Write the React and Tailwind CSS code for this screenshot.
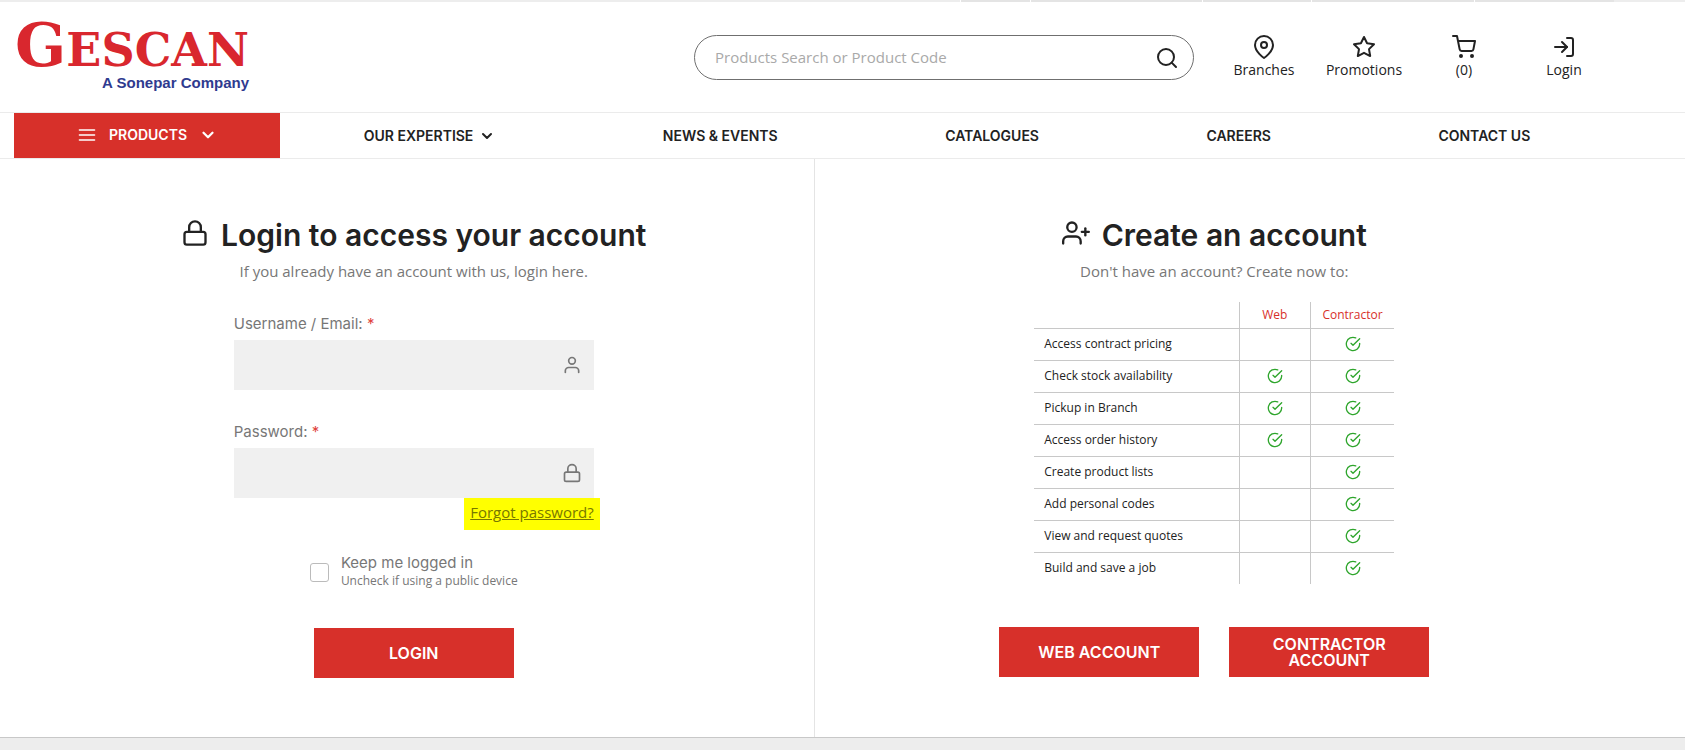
import { useState } from "react";

import {
  FiCheckCircle,
  FiChevronDown,
  FiLock,
  FiLogIn,
  FiMapPin,
  FiMenu,
  FiSearch,
  FiShoppingCart,
  FiStar,
  FiUser,
  FiUserPlus,
} from "react-icons/fi";

const headerLinks = [
  { label: "Branches", Icon: FiMapPin },
  { label: "Promotions", Icon: FiStar },
  { label: "(0)", Icon: FiShoppingCart },
  { label: "Login", Icon: FiLogIn },
];

const navLinks = [
  { label: "OUR EXPERTISE", hasMenu: true },
  { label: "NEWS & EVENTS" },
  { label: "CATALOGUES" },
  { label: "CAREERS" },
  { label: "CONTACT US" },
];

const features = [
  { label: "Access contract pricing", web: false, contractor: true },
  { label: "Check stock availability", web: true, contractor: true },
  { label: "Pickup in Branch", web: true, contractor: true },
  { label: "Access order history", web: true, contractor: true },
  { label: "Create product lists", web: false, contractor: true },
  { label: "Add personal codes", web: false, contractor: true },
  { label: "View and request quotes", web: false, contractor: true },
  { label: "Build and save a job", web: false, contractor: true },
];

const Logo = () => (
  <a href="#" className="flex w-[235px] flex-col items-end">
    <span className="font-['DejaVu_Serif',serif] text-[46px] leading-[46px] font-bold whitespace-nowrap text-[#d9272e]">
      <span className="text-[60px]">G</span>ESCAN
    </span>
    <span className="font-['Liberation_Sans',sans-serif] text-[15px] leading-5 font-bold text-[#2f3b8f]">
      A Sonepar Company
    </span>
  </a>
);

const TopBar = () => (
  <div className="h-0.5 bg-[#ededed]">
    <div className="flex h-full max-w-[1614px] justify-end">
      <div className="w-[70px] border-l border-white bg-[#e4e4e4]" />
      <div className="w-[172px] border-l border-white bg-[#e4e4e4]" />
      <div className="w-[109px] border-l border-white bg-[#e4e4e4]" />
      <div className="w-[163px] border-l border-white bg-[#e4e4e4]" />
      <div className="w-[140px] border-l border-white bg-[#e4e4e4]" />
    </div>
  </div>
);

const Header = () => (
  <header>
    <div className="ml-3.5 flex h-[110px] max-w-[1600px] items-start justify-between">
      <div className="pt-5">
        <Logo />
      </div>
      <div className="flex pt-[33px]">
        <form
          className="mr-5 flex h-[45px] w-[500px] items-center rounded-full border border-[#6f6f6f] pr-3.5 pl-5"
          onSubmit={(e) => e.preventDefault()}
        >
          <input
            type="search"
            aria-label="Products Search or Product Code"
            placeholder="Products Search or Product Code"
            className="min-w-0 flex-1 bg-transparent text-[15px] outline-none placeholder:text-[#a9a9a9]"
          />
          <button type="submit" aria-label="Search">
            <FiSearch size={24} />
          </button>
        </form>
        <div className="flex">
          {headerLinks.map(({ label, Icon }) => (
            <a
              key={label}
              href="#"
              className="flex w-[100px] flex-col items-center gap-px text-sm"
            >
              <Icon size={24} />
              <span>{label}</span>
            </a>
          ))}
        </div>
      </div>
    </div>
    <div className="border-y border-[#ebebeb]">
      <nav className="ml-3.5 flex h-[45px] max-w-[1600px] font-['Inter',sans-serif] text-sm font-semibold">
        <button
          type="button"
          className="flex w-[266px] items-center justify-center gap-3 bg-[#d7302a] pb-0.5 text-white"
        >
          <FiMenu size={20} />
          PRODUCTS
          <FiChevronDown size={18} strokeWidth={3} />
        </button>
        <div className="flex flex-1 items-center justify-around">
          {navLinks.map(({ label, hasMenu }) => (
            <a key={label} href="#" className="flex items-center gap-1.5">
              {label}
              {hasMenu && <FiChevronDown size={16} strokeWidth={3} />}
            </a>
          ))}
        </div>
      </nav>
    </div>
  </header>
);

const PanelTitle = ({ Icon, title, subtitle }) => (
  <>
    <h2 className="flex items-center gap-3 font-['Inter',sans-serif] text-[30px] leading-9 font-semibold">
      <Icon size={28} strokeWidth={2} className="mb-1" />
      {title}
    </h2>
    <p className="mt-1.5 text-[15px] leading-6 text-[#777]">{subtitle}</p>
  </>
);

const Field = ({ id, label, type, Icon, value, onChange }) => (
  <div className="w-full">
    <label
      htmlFor={id}
      className="block font-['Inter',sans-serif] text-[15px] leading-6 text-[#777]"
    >
      {label}: <span className="text-[#e0423c]">*</span>
    </label>
    <div className="mt-1 flex h-[50px] items-center bg-[#f0f0f0] pr-3">
      <input
        id={id}
        type={type}
        value={value}
        onChange={(e) => onChange(e.target.value)}
        className="h-full min-w-0 flex-1 bg-transparent px-3 outline-none"
      />
      <Icon size={20} className="text-[#777]" />
    </div>
  </div>
);

const ActionButton = ({ children, type = "button" }) => (
  <button
    type={type}
    className="h-[50px] w-[200px] bg-[#d7302a] px-8 font-['Inter',sans-serif] text-base leading-4 font-semibold text-white"
  >
    {children}
  </button>
);

const LoginPanel = () => {
  const [username, setUsername] = useState("");
  const [password, setPassword] = useState("");
  const [keepLogged, setKeepLogged] = useState(false);

  return (
    <section className="flex flex-1 flex-col items-center border-r border-[#e4e4e4] pt-[58px]">
      <PanelTitle
        Icon={FiLock}
        title="Login to access your account"
        subtitle="If you already have an account with us, login here."
      />
      <form
        className="mt-[29px] flex w-[360px] flex-col items-center"
        onSubmit={(e) => e.preventDefault()}
      >
        <Field
          id="username"
          label="Username / Email"
          type="text"
          Icon={FiUser}
          value={username}
          onChange={setUsername}
        />
        <div className="h-[30px]" />
        <Field
          id="password"
          label="Password"
          type="password"
          Icon={FiLock}
          value={password}
          onChange={setPassword}
        />
        <a
          href="#"
          className="-mr-1.5 h-8 self-end bg-[#ffff00] px-1.5 pt-0.5 text-[15px] leading-6 text-[#777700] underline"
        >
          Forgot password?
        </a>
        <label className="mt-6 flex items-center gap-3">
          <input
            type="checkbox"
            checked={keepLogged}
            onChange={(e) => setKeepLogged(e.target.checked)}
            className="size-[19px] appearance-none rounded-[3px] border border-[#bbb] bg-white checked:bg-[#d7302a]"
          />
          <span className="flex flex-col text-[#777]">
            <span className="font-['Inter',sans-serif] text-[15px] leading-[18px]">
              Keep me logged in
            </span>
            <span className="text-xs leading-[18px]">
              Uncheck if using a public device
            </span>
          </span>
        </label>
        <div className="mt-[38px]">
          <ActionButton type="submit">LOGIN</ActionButton>
        </div>
      </form>
    </section>
  );
};

const Check = ({ on }) =>
  on ? <FiCheckCircle size={16} className="mx-auto text-[#2ea52c]" /> : null;

const CreatePanel = () => (
  <section className="flex flex-1 flex-col items-center pt-[58px]">
    <PanelTitle
      Icon={FiUserPlus}
      title="Create an account"
      subtitle="Don't have an account? Create now to:"
    />
    <table className="mt-[19px] w-[360px] table-fixed border-collapse text-xs leading-5">
      <thead>
        <tr className="h-[26px] text-[#d7302a]">
          <th className="w-[205px]" aria-label="Feature" />
          <th className="w-[71px] border-l border-[#c8c8c8] font-normal">
            Web
          </th>
          <th className="border-l border-[#c8c8c8] font-normal">Contractor</th>
        </tr>
      </thead>
      <tbody>
        {features.map(({ label, web, contractor }) => (
          <tr key={label} className="h-8 border-t border-[#c8c8c8]">
            <td className="pl-2.5">{label}</td>
            <td className="border-l border-[#c8c8c8]">
              <Check on={web} />
            </td>
            <td className="border-l border-[#c8c8c8]">
              <Check on={contractor} />
            </td>
          </tr>
        ))}
      </tbody>
    </table>
    <div className="mt-[43px] flex gap-[30px]">
      <ActionButton>WEB ACCOUNT</ActionButton>
      <ActionButton>CONTRACTOR ACCOUNT</ActionButton>
    </div>
  </section>
);

const App = () => (
  <div className="flex min-h-screen flex-col bg-white font-['Open_Sans',sans-serif] text-[#222]">
    <TopBar />
    <Header />
    <main className="ml-3.5 flex max-w-[1600px] flex-1">
      <LoginPanel />
      <CreatePanel />
    </main>
    <footer className="h-[13px] border-t border-[#c8c8c8] bg-[#ededed]" />
  </div>
);

export default App;
